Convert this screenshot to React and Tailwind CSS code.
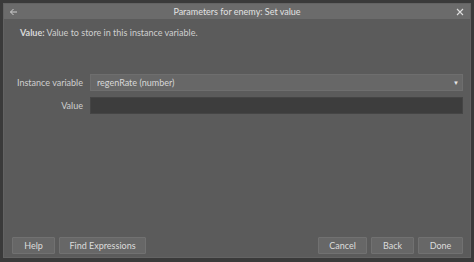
import { useState } from 'react'

export default function App() {
	const [variable, setVariable] = useState('regenRate')
	const [value, setValue] = useState('')

	const btn = 'h-[17px] bg-[#676767] border border-[#717171] text-[#dcdcdc] text-[9px] leading-none whitespace-nowrap rounded-[1px]'

	return (
		<div className="w-[474px] h-[262px] bg-[#3a3a3a] pt-[3px] px-[3px] pb-[4px]" style={{ fontFamily: 'Lato, "Open Sans", sans-serif' }}>
			<div className="h-full flex flex-col bg-[#5b5b5b] border border-[#636363]">
				<div className="h-[15px] shrink-0 flex items-center bg-[#6b6b6b] text-[#e2e2e2] text-[9px] px-[4px]">
					<svg width="9" height="8" viewBox="0 0 9 8" className="ml-[1px]">
						<path d="M8 4H1.5M4.5 1L1.5 4l3 3" stroke="#cfcfcf" strokeWidth="1" fill="none" />
					</svg>
					<div className="flex-1 text-center leading-none">Parameters for enemy: Set value</div>
					<svg width="8" height="8" viewBox="0 0 8 8" className="mr-[2px]">
						<path d="M1 1l6 6M7 1L1 7" stroke="#dedede" strokeWidth="1.1" fill="none" />
					</svg>
				</div>
				<div className="flex-1 flex flex-col px-[7px] pt-[9px] pb-[3px]">
					<div className="text-[9px] text-[#cfcfcf] leading-none pl-[9px]">
						<span className="font-bold text-[#d8d8d8]">Value:</span> Value to store in this instance variable.
					</div>
					<div className="mt-[37px] grid grid-cols-[72px_1fr] gap-x-[7px] gap-y-[6px] items-center">
						<label className="text-right text-[9px] text-[#cfcfcf]">Instance variable</label>
						<div className="relative h-[17px] bg-[#676767] border border-[#6e6e6e] flex items-center">
							<select
								className="appearance-none w-full h-full bg-transparent text-[9px] text-[#d8d8d8] pl-[6px] outline-none"
								value={variable}
								onChange={(e) => setVariable(e.target.value)}
							>
								<option value="regenRate">regenRate (number)</option>
							</select>
							<span className="absolute right-[3px] top-[3px] text-[6px] text-[#e6e6e6] pointer-events-none">&#9660;</span>
						</div>
						<label className="text-right text-[9px] text-[#cfcfcf]">Value</label>
						<input
							className="h-[17px] bg-[#3d3d3d] border border-[#454545] text-[9px] text-[#dcdcdc] px-[4px] outline-none"
							value={value}
							onChange={(e) => setValue(e.target.value)}
						/>
					</div>
					<div className="mt-auto flex items-center gap-[4px] pl-[1px]">
						<button className={btn + ' w-[43px]'}>Help</button>
						<button className={btn + ' w-[87px]'}>Find Expressions</button>
						<div className="flex-1" />
						<button className={btn + ' w-[49px]'}>Cancel</button>
						<button className={btn + ' w-[43px]'}>Back</button>
						<button className={btn + ' w-[45px]'}>Done</button>
					</div>
				</div>
			</div>
		</div>
	)
}
